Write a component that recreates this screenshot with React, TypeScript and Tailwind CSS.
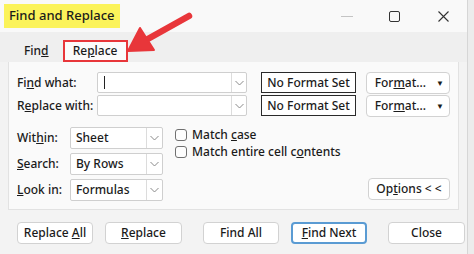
import React from "react";

const font = { fontFamily: '"Noto Sans", "Open Sans", sans-serif' };

function Chevron({ className = "" }: { className?: string }) {
  return (
    <svg width="9" height="6" viewBox="0 0 9 6" className={className}>
      <path d="M0.5 1 L4.5 5 L8.5 1" fill="none" stroke="#8a8a8a" strokeWidth="1" />
    </svg>
  );
}

function Combo({ width, children }: { width: string; children?: React.ReactNode }) {
  return (
    <div className={`${width} h-[22px] flex bg-white border border-[#cfcfcf] rounded-[2px]`}>
      <div className="flex-1 flex items-center pl-[5px] text-[12px] text-[#1b1b1b]">{children}</div>
      <div className="w-[16px] border-l border-[#dcdcdc] flex items-center justify-center">
        <Chevron />
      </div>
    </div>
  );
}

function Btn({ children, className = "" }: { children: React.ReactNode; className?: string }) {
  return (
    <div
      className={`h-[22px] flex items-center justify-center bg-white border border-[#d2d2d2] rounded-[4px] text-[12px] text-[#1b1b1b] ${className}`}
    >
      {children}
    </div>
  );
}

function Check({ children }: { children: React.ReactNode }) {
  return (
    <div className="flex items-center gap-[5px] h-[17px]">
      <div className="w-[12px] h-[12px] rounded-[3px] border border-[#707070] bg-[#fdfdfd]" />
      <span className="text-[12px] text-[#1b1b1b]">{children}</span>
    </div>
  );
}

export default function App() {
  return (
    <div className="w-[474px] h-[254px] bg-[#ececec] relative overflow-hidden font-medium" style={font}>
      <div className="w-[468px] h-[254px] bg-[#f3f3f3] border-r border-[#d6d6d6] flex flex-col">
        {/* Title bar */}
        <div className="h-[32px] bg-[#f9f9f9] flex items-center pl-[4px]">
          <div className="bg-[#fbf35a] h-[24px] px-[5px] flex items-center text-[13px] text-[#1b1b1b]">
            Find and Replace
          </div>
          <div className="flex-1" />
          <div className="w-[12px] h-px bg-[#c4c4c4] mr-[36px]" />
          <div className="w-[11px] h-[11px] border border-[#333] rounded-[2px] mr-[38px]" />
          <svg width="11" height="11" viewBox="0 0 11 11" className="mr-[18px]">
            <path d="M0.5 0.5 L10.5 10.5 M10.5 0.5 L0.5 10.5" stroke="#333" strokeWidth="1.1" />
          </svg>
        </div>

        {/* Tabs */}
        <div className="h-[30px] bg-[#efefef] flex items-end pl-[14px]">
          <div className="h-[22px] px-[10px] flex items-center text-[12px] text-[#1b1b1b]">
            <span>
              Fin<u>d</u>
            </span>
          </div>
          <div className="h-[22px] w-[65px] ml-[4px] bg-[#fbfbfb] border-2 border-[#e8363a] flex items-center justify-center text-[12px] text-[#1b1b1b]">
            <span>
              Re<u>p</u>lace
            </span>
          </div>
        </div>

        {/* Panel */}
        <div className="mx-[8px] h-[148px] bg-[#fafafa] border border-t-0 border-[#e2e2e2] pl-[8px] pr-[8px] pt-[10px] flex flex-col">
          <div className="flex items-center h-[21px]">
            <div className="w-[81px] text-[12px] text-[#1b1b1b]">
              Fi<u>n</u>d what:
            </div>
            <div className="w-[152px] h-[21px] flex bg-white border border-[#cfcfcf] rounded-[2px]">
              <div className="flex-1 flex items-center pl-[6px]">
                <div className="w-px h-[13px] bg-[#222]" />
              </div>
              <div className="w-[15px] border-l border-[#dcdcdc] flex items-center justify-center">
                <Chevron />
              </div>
            </div>
            <div className="ml-[14px] w-[96px] h-[21px] border-[1.5px] border-[#2a2a2a] bg-white flex items-center justify-center text-[12px] text-[#1b1b1b]">
              No Format Set
            </div>
            <Btn className="ml-[10px] w-[85px] !justify-end pr-[5px] gap-[10px] h-[20px]">
              <span>
                For<u>m</u>at...
              </span>
              <span className="text-[8px]">▼</span>
            </Btn>
          </div>
          <div className="flex items-center h-[21px] mt-[2px]">
            <div className="w-[81px] text-[12px] text-[#1b1b1b]">
              R<u>e</u>place with:
            </div>
            <div className="w-[152px] h-[21px] flex bg-white border border-[#cfcfcf] rounded-[2px]">
              <div className="flex-1" />
              <div className="w-[15px] border-l border-[#dcdcdc] flex items-center justify-center">
                <Chevron />
              </div>
            </div>
            <div className="ml-[14px] w-[96px] h-[21px] border-[1.5px] border-[#2a2a2a] bg-white flex items-center justify-center text-[12px] text-[#1b1b1b]">
              No Format Set
            </div>
            <Btn className="ml-[10px] w-[85px] !justify-end pr-[5px] gap-[10px] h-[20px]">
              <span>
                For<u>m</u>at...
              </span>
              <span className="text-[8px]">▼</span>
            </Btn>
          </div>

          <div className="flex mt-[11px]">
            <div className="flex flex-col gap-[4px]">
              <div className="flex items-center">
                <div className="w-[53px] text-[12px] text-[#1b1b1b]">
                  Wit<u>h</u>in:
                </div>
                <Combo width="w-[93px]">Sheet</Combo>
              </div>
              <div className="flex items-center">
                <div className="w-[53px] text-[12px] text-[#1b1b1b]">
                  <u>S</u>earch:
                </div>
                <Combo width="w-[93px]">By Rows</Combo>
              </div>
              <div className="flex items-center">
                <div className="w-[53px] text-[12px] text-[#1b1b1b]">
                  <u>L</u>ook in:
                </div>
                <Combo width="w-[93px]">Formulas</Combo>
              </div>
            </div>
            <div className="flex-1 ml-[12px] flex flex-col">
              <div className="mt-[-1px]">
                <Check>
                  Match <u>c</u>ase
                </Check>
                <Check>
                  Match entire cell c<u>o</u>ntents
                </Check>
              </div>
              <div className="flex-1" />
              <Btn className="self-end w-[82px] h-[21px] mb-[1px]">
                <span>
                  Op<u>t</u>ions &lt; &lt;
                </span>
              </Btn>
            </div>
          </div>
        </div>

        {/* Bottom buttons */}
        <div className="flex items-center pl-[17px] pt-[12px]">
          <Btn className="w-[76px]">
            <span>
              Replace <u>A</u>ll
            </span>
          </Btn>
          <Btn className="w-[77px] ml-[12px]">
            <span>
              <u>R</u>eplace
            </span>
          </Btn>
          <Btn className="w-[76px] ml-[21px]">Find All</Btn>
          <Btn className="w-[76px] ml-[12px] !border-2 !border-[#5a9bd3]">
            <span>
              <u>F</u>ind Next
            </span>
          </Btn>
          <Btn className="w-[77px] ml-[21px]">Close</Btn>
        </div>
      </div>

      {/* Red callout arrow */}
      <svg className="absolute left-0 top-0" width="474" height="254" viewBox="0 0 474 254">
        <path d="M189 16 L146 40" stroke="#e8363a" strokeWidth="6.5" strokeLinecap="round" />
        <polygon points="128,51 140,28 154,50" fill="#e8363a" stroke="#e8363a" strokeWidth="2" strokeLinejoin="round" />
      </svg>
    </div>
  );
}
